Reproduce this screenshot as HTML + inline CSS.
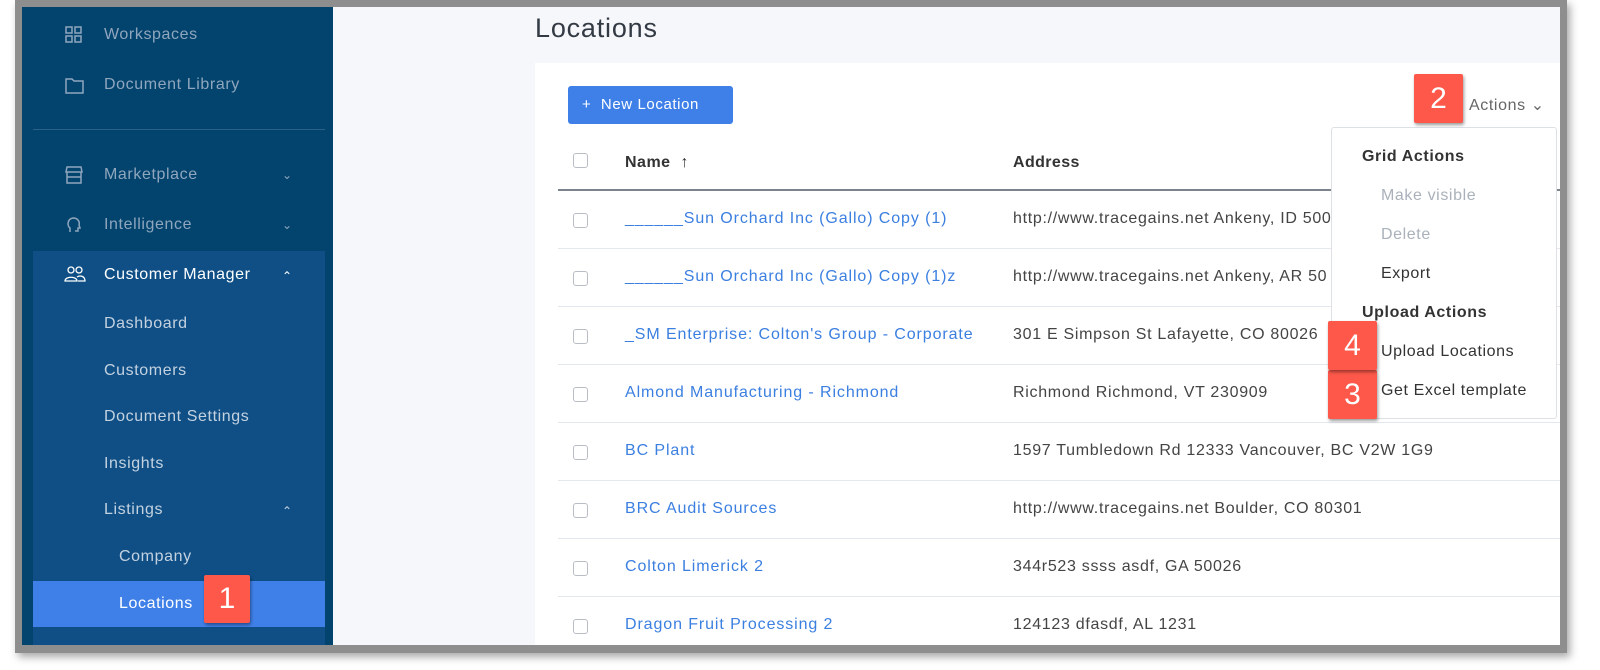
<!DOCTYPE html>
<html><head><style>
*{box-sizing:border-box;margin:0;padding:0}
body{width:1600px;height:670px;background:#fff;font-family:"Liberation Sans",sans-serif;position:relative;overflow:hidden;letter-spacing:0.6px}
.frame{position:absolute;left:15px;top:0;width:1552px;height:653px;background:#8e8e8e;box-shadow:3px 4px 8px rgba(0,0,0,.35)}
.in{position:absolute;left:22px;top:7px;width:1538px;height:638px;background:#f6f7fb;overflow:hidden}
.side{position:absolute;left:0;top:0;width:311px;height:638px;background:#03446f}
.sl{position:absolute;left:82px;color:#8fa6bd;font-size:16px}
.ic{position:absolute;left:42px}
.sep{position:absolute;left:11px;top:122px;width:292px;height:1px;background:#2a5f86}
.grp{position:absolute;left:11px;top:244px;width:292px;height:394px;background:#0f4f86}
.w{color:#fff}
.sub{color:#c4d2e0;font-size:16px;position:absolute}
.chev{position:absolute;color:#8fa6bd;font-size:12px}
.card{position:absolute;left:513px;top:56px;width:1040px;height:600px;background:#fff}
h1{position:absolute;left:513px;top:6px;font-size:27px;font-weight:normal;color:#333a44;letter-spacing:0.8px}
.btn{position:absolute;left:33px;top:23px;width:165px;height:38px;background:#3f80e8;border-radius:3px;color:#fff;font-size:15px;line-height:38px;padding-left:14px}
.row{position:absolute;left:23px;width:1020px;height:58px;border-bottom:1px solid #e3e7ee}
.cb{position:absolute;left:15px;top:22px;width:15px;height:15px;border:1px solid #b9bec6;border-radius:3px}
.nm{position:absolute;left:67px;top:19px;color:#3b7fe0;font-size:16px;letter-spacing:0.9px}
.ad{position:absolute;left:455px;top:19px;color:#444;font-size:16px;letter-spacing:0.7px}
.badge{position:absolute;background:#fd584a;color:#fff;font-size:30px;text-align:center;border-radius:2px;box-shadow:1px 2px 3px rgba(0,0,0,.4);letter-spacing:0}
.menu{position:absolute;left:1309px;top:120px;width:226px;height:292px;background:#fff;border:1px solid #dde1e6;border-radius:3px;font-size:15px}
.menu div{position:absolute}
</style></head><body>
<div class="frame"></div>
<div class="in">
 <div class="side">
  <svg class="ic" style="top:18px" width="20" height="20" viewBox="0 0 20 20" fill="none" stroke="#8fa6bd" stroke-width="1.5"><rect x="2" y="2" width="6" height="6"/><rect x="11" y="2" width="6" height="6"/><rect x="2" y="11" width="6" height="6"/><rect x="11" y="11" width="6" height="6"/></svg>
  <div class="sl" style="top:19px">Workspaces</div>
  <svg class="ic" style="top:69px" width="22" height="20" viewBox="0 0 22 20" fill="none" stroke="#8fa6bd" stroke-width="1.5"><path d="M2 3h6l2 2h9v12H2z"/></svg>
  <div class="sl" style="top:69px">Document Library</div>
  <div class="sep"></div>
  <svg class="ic" style="top:158px" width="20" height="20" viewBox="0 0 20 20" fill="none" stroke="#8fa6bd" stroke-width="1.5"><path d="M3 2h14l1 5H2zM3 7v11h14V7M3 12h14"/></svg>
  <div class="sl" style="top:159px">Marketplace</div><div class="chev" style="left:260px;top:161px">&#8964;</div>
  <svg class="ic" style="top:208px" width="20" height="20" viewBox="0 0 20 20" fill="none" stroke="#8fa6bd" stroke-width="1.5"><path d="M6 17v-4C3 11 3 4 9 3c5 0 7 4 6 7l1 3h-2v3h-3"/></svg>
  <div class="sl" style="top:209px">Intelligence</div><div class="chev" style="left:260px;top:211px">&#8964;</div>
  <div class="grp"></div>
  <svg class="ic" style="top:258px" width="22" height="20" viewBox="0 0 22 20" fill="none" stroke="#fff" stroke-width="1.3"><circle cx="7" cy="5" r="3"/><circle cx="15" cy="5" r="3"/><path d="M1 16c0-5 12-5 12 0zM13 12c3-2 8-1 8 4h-7"/></svg>
  <div class="sl w" style="top:259px">Customer Manager</div><div class="chev" style="left:260px;top:262px;color:#fff">&#8963;</div>
  <div class="sub" style="left:82px;top:308px">Dashboard</div>
  <div class="sub" style="left:82px;top:355px">Customers</div>
  <div class="sub" style="left:82px;top:401px">Document Settings</div>
  <div class="sub" style="left:82px;top:448px">Insights</div>
  <div class="sub" style="left:82px;top:494px">Listings</div><div class="chev" style="left:260px;top:497px;color:#c4d2e0">&#8963;</div>
  <div class="sub" style="left:97px;top:541px">Company</div>
  <div style="position:absolute;left:11px;top:574px;width:292px;height:46px;background:#3f80e8"></div>
  <div class="sub" style="left:97px;top:588px;color:#fff">Locations</div>
 </div>
 <h1>Locations</h1>
 <div class="card">
  <div class="btn">+&nbsp; New Location</div>
  <div style="position:absolute;left:934px;top:32px;color:#666;font-size:16px">Actions &#8964;</div>
  <div class="row" style="top:70px;border-bottom:2px solid #7d838c"><div class="cb" style="top:20px"></div><div class="nm" style="color:#333;top:21px;font-weight:bold;letter-spacing:0.5px">Name &nbsp;&#8593;</div><div class="ad" style="color:#333;top:21px;font-weight:bold;letter-spacing:0.4px">Address</div></div>
  <div class="row" style="top:128px"><div class="cb"></div><div class="nm">______Sun Orchard Inc (Gallo) Copy (1)</div><div class="ad">http://www.tracegains.net Ankeny, ID 500</div></div>
  <div class="row" style="top:186px"><div class="cb"></div><div class="nm">______Sun Orchard Inc (Gallo) Copy (1)z</div><div class="ad">http://www.tracegains.net Ankeny, AR 50</div></div>
  <div class="row" style="top:244px"><div class="cb"></div><div class="nm">_SM Enterprise: Colton's Group - Corporate</div><div class="ad">301 E Simpson St Lafayette, CO 80026</div></div>
  <div class="row" style="top:302px"><div class="cb"></div><div class="nm">Almond Manufacturing - Richmond</div><div class="ad">Richmond Richmond, VT 230909</div></div>
  <div class="row" style="top:360px"><div class="cb"></div><div class="nm">BC Plant</div><div class="ad">1597 Tumbledown Rd 12333 Vancouver, BC V2W 1G9</div></div>
  <div class="row" style="top:418px"><div class="cb"></div><div class="nm">BRC Audit Sources</div><div class="ad">http://www.tracegains.net Boulder, CO 80301</div></div>
  <div class="row" style="top:476px"><div class="cb"></div><div class="nm">Colton Limerick 2</div><div class="ad">344r523 ssss asdf, GA 50026</div></div>
  <div class="row" style="top:534px"><div class="cb"></div><div class="nm">Dragon Fruit Processing 2</div><div class="ad">124123 dfasdf, AL 1231</div></div>
 </div>
 <div class="menu">
  <div style="left:30px;top:20px;color:#333;font-weight:bold;font-size:16px">Grid Actions</div>
  <div style="left:49px;top:59px;color:#aab1ba;font-size:16px">Make visible</div>
  <div style="left:49px;top:98px;color:#aab1ba;font-size:16px">Delete</div>
  <div style="left:49px;top:137px;color:#333;font-size:16px">Export</div>
  <div style="left:30px;top:176px;color:#333;font-weight:bold;font-size:16px">Upload Actions</div>
  <div style="left:49px;top:215px;color:#333;font-size:16px">Upload Locations</div>
  <div style="left:49px;top:254px;color:#333;font-size:16px">Get Excel template</div>
 </div>
 <div class="badge" style="left:182px;top:568px;width:46px;height:48px;line-height:48px">1</div>
 <div class="badge" style="left:1392px;top:67px;width:49px;height:49px;line-height:49px">2</div>
 <div class="badge" style="left:1306px;top:363px;width:49px;height:49px;line-height:49px">3</div>
 <div class="badge" style="left:1306px;top:314px;width:49px;height:49px;line-height:49px">4</div>
</div>
</body></html>
